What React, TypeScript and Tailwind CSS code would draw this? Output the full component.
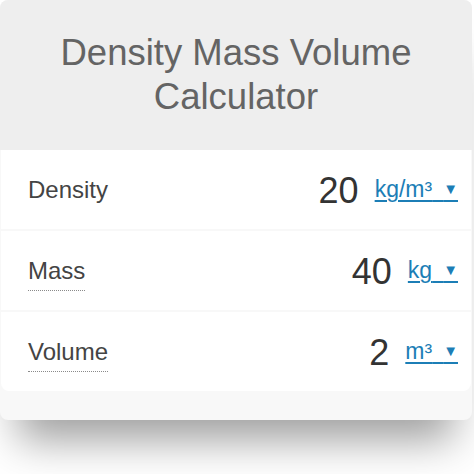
import React from "react";

type Row = {
  label: string;
  value: string;
  unit: string;
  dotted?: boolean;
};

const rows: Row[] = [
  { label: "Density", value: "20", unit: "kg/m³" },
  { label: "Mass", value: "40", unit: "kg", dotted: true },
  { label: "Volume", value: "2", unit: "m³", dotted: true },
];

export default function App() {
  return (
    <div
      className="w-[474px] h-[474px] bg-white overflow-hidden"
      style={{ fontFamily: '"Liberation Sans", Arial, sans-serif' }}
    >
      <div className="w-[472px] h-[420px] bg-[#f8f8f8] rounded-[8px] shadow-[0_38px_40px_-18px_rgba(0,0,0,0.38)] flex flex-col">
        {/* Header */}
        <div className="h-[150px] bg-[#eeeeee] rounded-t-[8px] flex items-center justify-center">
          <h1 className="text-[36.5px] leading-[44px] text-[#646464] text-center">
            Density Mass Volume
            <br />
            Calculator
          </h1>
        </div>

        {/* Fields */}
        <div className="flex flex-col gap-[2px] mx-[1px]">
          {rows.map((row, i) => (
            <div
              key={row.label}
              className={
                "h-[79px] bg-white flex items-center justify-between pl-[27px] pr-[13px] " +
                (i === rows.length - 1 ? "rounded-b-[8px]" : "")
              }
            >
              <span
                className={
                  "text-[24px] leading-[28px] text-[#444444] " +
                  (row.dotted ? "border-b border-dotted border-[#8a8a8a] pb-[5px] mt-[6px]" : "")
                }
              >
                {row.label}
              </span>
              <div className="flex items-center gap-[16px]">
                <span className="text-[36px] leading-none text-[#333333] mt-[2px]">
                  {row.value}
                </span>
                <span className="text-[23px] leading-none text-[#1c7eb6] underline decoration-[1.5px] underline-offset-[3px]">
                  {row.unit}
                  {"\u00a0\u2009"}
                  <span className="text-[15px] align-[3px]">▼</span>
                </span>
              </div>
            </div>
          ))}
        </div>
      </div>
    </div>
  );
}
